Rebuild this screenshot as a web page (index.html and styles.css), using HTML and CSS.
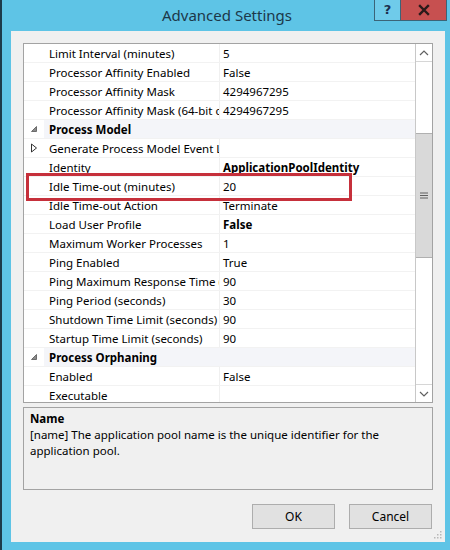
FILE: index.html
```html
<!DOCTYPE html>
<html>
<head>
<meta charset="utf-8">
<link rel="stylesheet" href="styles.css">
</head>
<body>
<div class="window">
  <div class="titlebar">
    <div class="title">Advanced Settings</div>
    <div class="caption">
      <div class="cap-help">?</div>
      <div class="cap-close">
        <svg width="14" height="12" viewBox="0 0 14 12"><path d="M3 2 L11 10 M11 2 L3 10" stroke="#2a1a1a" stroke-width="2.4" stroke-linecap="square"/></svg>
      </div>
    </div>
  </div>
  <div class="client">
    <div class="grid">
      <div class="rows">
        <div class="row"><div class="gutter"></div><div class="name">Limit Interval (minutes)</div><div class="value">5</div></div>
        <div class="row"><div class="gutter"></div><div class="name">Processor Affinity Enabled</div><div class="value">False</div></div>
        <div class="row"><div class="gutter"></div><div class="name">Processor Affinity Mask</div><div class="value">4294967295</div></div>
        <div class="row"><div class="gutter"></div><div class="name">Processor Affinity Mask (64-bit c</div><div class="value">4294967295</div></div>
        <div class="row cat"><div class="gutter"><svg width="8" height="8" viewBox="0 0 8 8"><path d="M6.5 1.5 L6.5 6.5 L1.5 6.5 Z" fill="#8a8a8a" stroke="#555" stroke-width="0.8"/></svg></div><div class="catname">Process Model</div></div>
        <div class="row"><div class="gutter"><svg width="8" height="10" viewBox="0 0 8 10"><path d="M1.5 1 L6.5 5 L1.5 9 Z" fill="none" stroke="#333" stroke-width="1"/></svg></div><div class="name">Generate Process Model Event L</div><div class="value"></div></div>
        <div class="row"><div class="gutter"></div><div class="name">Identity</div><div class="value bold">ApplicationPoolIdentity</div></div>
        <div class="row"><div class="gutter"></div><div class="name">Idle Time-out (minutes)</div><div class="value">20</div></div>
        <div class="row"><div class="gutter"></div><div class="name">Idle Time-out Action</div><div class="value">Terminate</div></div>
        <div class="row"><div class="gutter"></div><div class="name">Load User Profile</div><div class="value bold">False</div></div>
        <div class="row"><div class="gutter"></div><div class="name">Maximum Worker Processes</div><div class="value">1</div></div>
        <div class="row"><div class="gutter"></div><div class="name">Ping Enabled</div><div class="value">True</div></div>
        <div class="row"><div class="gutter"></div><div class="name">Ping Maximum Response Time (</div><div class="value">90</div></div>
        <div class="row"><div class="gutter"></div><div class="name">Ping Period (seconds)</div><div class="value">30</div></div>
        <div class="row"><div class="gutter"></div><div class="name">Shutdown Time Limit (seconds)</div><div class="value">90</div></div>
        <div class="row"><div class="gutter"></div><div class="name">Startup Time Limit (seconds)</div><div class="value">90</div></div>
        <div class="row cat"><div class="gutter"><svg width="8" height="8" viewBox="0 0 8 8"><path d="M6.5 1.5 L6.5 6.5 L1.5 6.5 Z" fill="#8a8a8a" stroke="#555" stroke-width="0.8"/></svg></div><div class="catname">Process Orphaning</div></div>
        <div class="row"><div class="gutter"></div><div class="name">Enabled</div><div class="value">False</div></div>
        <div class="row"><div class="gutter"></div><div class="name">Executable</div><div class="value"></div></div>
      </div>
      <div class="scrollbar">
        <div class="sb-btn"><svg width="10" height="6" viewBox="0 0 10 6"><path d="M1 5 L5 1 L9 5" fill="none" stroke="#606060" stroke-width="1.2"/></svg></div>
        <div class="sb-space top"></div>
        <div class="sb-thumb"><svg width="8" height="7" viewBox="0 0 8 7"><path d="M0 1 H8 M0 3.5 H8 M0 6 H8" stroke="#606060" stroke-width="1.2"/></svg></div>
        <div class="sb-space bottom"></div>
        <div class="sb-btn down"><svg width="10" height="6" viewBox="0 0 10 6"><path d="M1 1 L5 5 L9 1" fill="none" stroke="#606060" stroke-width="1.2"/></svg></div>
      </div>
    </div>
    <div class="desc">
      <div class="desc-title">Name</div>
      <div class="desc-text">[name] The application pool name is the unique identifier for the application pool.</div>
    </div>
    <div class="buttons">
      <div class="button">OK</div>
      <div class="button">Cancel</div>
    </div>
    <div class="grip">
      <svg width="8" height="8" viewBox="0 0 8 8"><g fill="#b8b8b8"><rect x="6" y="0" width="1.5" height="1.5"/><rect x="3" y="3" width="1.5" height="1.5"/><rect x="6" y="3" width="1.5" height="1.5"/><rect x="0" y="6" width="1.5" height="1.5"/><rect x="3" y="6" width="1.5" height="1.5"/><rect x="6" y="6" width="1.5" height="1.5"/></g></svg>
    </div>
  </div>
  <div class="highlight"></div>
</div>
</body>
</html>
```
FILE: styles.css
```css
html, body {
  margin: 0;
  padding: 0;
}
body {
  background: #5ec4e6;
  font-family: "Noto Sans", "Open Sans", sans-serif;
  font-size: 11.5px;
  color: #000;
}
.window {
  position: relative;
  width: 450px;
  height: 550px;
  background: #5ec4e6;
  border-left: 2px solid #1d3b4b;
  box-sizing: border-box;
  overflow: hidden;
}
.titlebar {
  display: flex;
  height: 31px;
}
.title {
  flex: 1;
  padding-left: 78px;
  text-align: center;
  font-size: 15px;
  line-height: 31px;
  color: #1c3849;
}
.caption {
  display: flex;
  height: 21px;
  margin-right: 3px;
}
.cap-help {
  width: 26px;
  height: 21px;
  box-sizing: border-box;
  border: 1px solid #3b6478;
  border-top: none;
  border-right: none;
  background: #6fcbea;
  color: #1b2f4e;
  font-weight: bold;
  font-size: 13px;
  text-align: center;
  line-height: 19px;
  font-family: "DejaVu Sans", sans-serif;
}
.cap-close {
  width: 47px;
  height: 21px;
  box-sizing: border-box;
  border: 1px solid #3b6478;
  border-top: none;
  background: #c75050;
  display: flex;
  align-items: center;
  justify-content: center;
}
.client {
  position: relative;
  margin-left: 9px;
  width: 434px;
  height: 511px;
  box-sizing: border-box;
  background: #f0f0f0;
  padding: 12px 12px 0 12px;
}
.grid {
  display: flex;
  height: 360px;
  box-sizing: border-box;
  border: 1px solid #a3a3a3;
  background: #fff;
}
.rows {
  flex: 1;
  overflow: hidden;
}
.row {
  display: flex;
  height: 19px;
  line-height: 19px;
  box-sizing: border-box;
  border-bottom: 1px solid #f2f2f2;
  white-space: nowrap;
}
.gutter {
  width: 20px;
  flex: none;
  display: flex;
  align-items: center;
  justify-content: center;
  background: #fff;
}
.name {
  width: 170px;
  flex: none;
  padding-left: 5px;
  overflow: hidden;
}
.value {
  flex: 1;
  padding-left: 3px;
  border-left: 1px solid #f0f0f0;
  overflow: hidden;
}
.bold {
  font-weight: bold;
}
.cat {
  background: #f5f6fa;
}
.catname {
  flex: 1;
  padding-left: 5px;
  font-weight: bold;
  background: #f4f5f9;
}
.scrollbar {
  width: 17px;
  flex: none;
  display: flex;
  flex-direction: column;
  border-left: 1px solid #c8c8c8;
  box-sizing: border-box;
  background: #fff;
}
.sb-btn {
  height: 17px;
  flex: none;
  display: flex;
  align-items: center;
  justify-content: center;
  border-bottom: 1px solid #d6d6d6;
}
.sb-btn.down {
  border-bottom: none;
  border-top: 1px solid #d6d6d6;
}
.sb-space.top {
  height: 71px;
}
.sb-space.bottom {
  flex: 1;
}
.sb-thumb {
  height: 125px;
  box-sizing: border-box;
  background: #d9d9d9;
  border-top: 1px solid #b0b0b0;
  border-bottom: 1px solid #b0b0b0;
  display: flex;
  align-items: center;
  justify-content: center;
}
.desc {
  margin-top: 4px;
  height: 83px;
  box-sizing: border-box;
  border: 1px solid #a3a3a3;
  padding: 3px 6px;
  line-height: 16px;
}
.desc-title {
  font-weight: bold;
}
.buttons {
  display: flex;
  justify-content: flex-end;
  gap: 14px;
  margin-top: 14px;
  padding-right: 1px;
}
.button {
  width: 83px;
  height: 25px;
  box-sizing: border-box;
  border: 1px solid #adadad;
  background: #e1e1e1;
  text-align: center;
  line-height: 23px;
  font-size: 12px;
}
.grip {
  position: absolute;
  right: 3px;
  bottom: 3px;
  line-height: 0;
}
.highlight {
  position: absolute;
  left: 24px;
  top: 173px;
  width: 326px;
  height: 28px;
  box-sizing: border-box;
  border: 3px solid #c6303b;
}
```
